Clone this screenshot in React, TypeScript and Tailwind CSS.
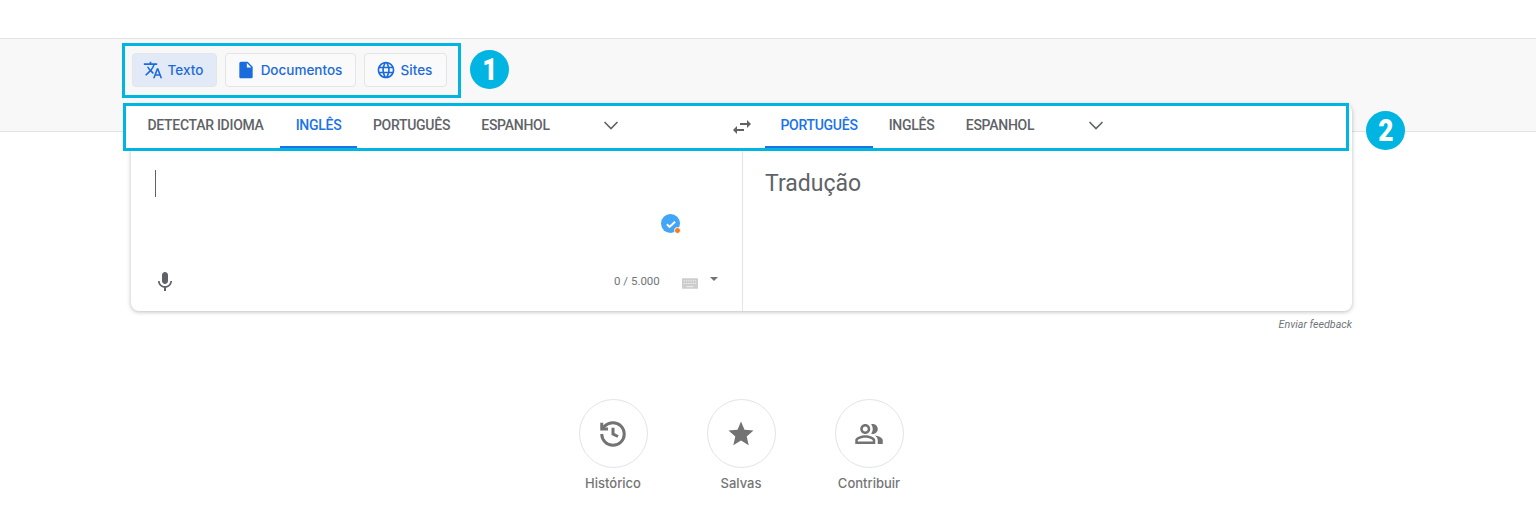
const roboto = "font-['Roboto',sans-serif]";

const Icon = ({ d, className }: { d: string; className: string }) => (
  <svg viewBox="0 0 24 24" fill="currentColor" className={className}>
    <path d={d} />
  </svg>
);

const Chevron = ({ className }: { className: string }) => (
  <svg viewBox="0 0 24 24" fill="none" stroke="currentColor" strokeWidth="1.6" className={`h-[24px] w-[24px] text-[#5f6368] ${className}`}>
    <path d="M5.5 9l6.5 6.5L18.5 9" />
  </svg>
);

const icons = {
  translate:
    "M12.87 15.07l-2.54-2.51.03-.03c1.74-1.94 2.98-4.17 3.71-6.53H17V4h-7V2H8v2H1v1.99h11.17C11.5 7.92 10.44 9.75 9 11.35 8.07 10.32 7.3 9.19 6.69 8h-2c.73 1.63 1.73 3.17 2.98 4.56l-5.09 5.02L4 19l5-5 3.11 3.11.76-2.04zM18.5 10h-2L12 22h2l1.12-3h4.75L21 22h2l-4.5-12zm-2.62 7l1.62-4.33L19.12 17h-3.24z",
  file: "M6 2c-1.1 0-1.99.9-1.99 2L4 20c0 1.1.89 2 1.99 2H18c1.1 0 2-.9 2-2V8l-6-6H6zm7 7V3.5L18.5 9H13z",
  globe:
    "M11.99 2C6.47 2 2 6.48 2 12s4.47 10 9.99 10C17.52 22 22 17.52 22 12S17.52 2 11.99 2zm6.93 6h-2.95c-.32-1.25-.78-2.45-1.38-3.56 1.84.63 3.37 1.91 4.33 3.56zM12 4.04c.83 1.2 1.48 2.53 1.91 3.96h-3.82c.43-1.43 1.08-2.76 1.91-3.96zM4.26 14C4.1 13.36 4 12.69 4 12s.1-1.36.26-2h3.38c-.08.66-.14 1.32-.14 2 0 .68.06 1.34.14 2H4.26zm.82 2h2.95c.32 1.25.78 2.45 1.38 3.56-1.84-.63-3.37-1.9-4.33-3.56zm2.95-8H5.08c.96-1.66 2.49-2.93 4.33-3.56C8.81 5.55 8.35 6.75 8.03 8zM12 19.96c-.83-1.2-1.48-2.53-1.91-3.96h3.82c-.43 1.43-1.08 2.76-1.91 3.96zM14.34 14H9.66c-.09-.66-.16-1.32-.16-2 0-.68.07-1.35.16-2h4.68c.09.65.16 1.32.16 2 0 .68-.07 1.34-.16 2zm.25 5.56c.6-1.11 1.06-2.31 1.38-3.56h2.95c-.96 1.65-2.49 2.93-4.33 3.56zM16.36 14c.08-.66.14-1.32.14-2 0-.68-.06-1.34-.14-2h3.38c.16.64.26 1.31.26 2s-.1 1.36-.26 2h-3.38z",
  swap: "M6.99 11L3 15l3.99 4v-3H14v-2H6.99v-3zM21 9l-3.99-4v3H10v2h7.01v3L21 9z",
  mic: "M12 14c1.66 0 2.99-1.34 2.99-3L15 5c0-1.66-1.34-3-3-3S9 3.34 9 5v6c0 1.66 1.34 3 3 3zm5.3-3c0 3-2.54 5.1-5.3 5.1S6.7 14 6.7 11H5c0 3.41 2.72 6.23 6 6.72V21h2v-3.28c3.28-.48 6-3.3 6-6.72h-1.7z",
  star: "M12 17.27L18.18 21l-1.64-7.03L22 9.24l-7.19-.61L12 2 9.19 8.63 2 9.24l5.46 4.73L5.82 21z",
  people:
    "M16.67 13.13C18.04 14.06 19 15.32 19 17v3h4v-3c0-2.18-3.57-3.47-6.33-3.87zM9 12c2.21 0 4-1.79 4-4s-1.79-4-4-4-4 1.79-4 4 1.79 4 4 4zm0-6c1.1 0 2 .9 2 2s-.9 2-2 2-2-.9-2-2 .9-2 2-2zm6 6c2.21 0 4-1.79 4-4s-1.79-4-4-4c-.47 0-.91.1-1.33.24C14.5 5.27 15 6.58 15 8s-.5 2.73-1.33 3.76c.42.14.86.24 1.33.24zm-6 1c-2.67 0-8 1.34-8 4v3h16v-3c0-2.66-5.33-4-8-4zm6 5H3v-.99C3.2 16.29 6.3 15 9 15s5.8 1.29 6 2v1z",
};

const HistoryIcon = () => (
  <svg viewBox="0 0 24 24" fill="none" stroke="currentColor" strokeWidth="2.4" className="h-[30px] w-[30px]">
    <path d="M3 12a9 9 0 1 0 9-9 9.75 9.75 0 0 0-6.74 2.74L3 8" />
    <path d="M3 3v5h5" />
    <path d="M12 7v5l4 2" />
  </svg>
);

const Badge = ({ n, className }: { n: string; className: string }) => (
  <div className={`flex h-[39px] w-[39px] items-center justify-center rounded-full bg-[#00b5e2] text-white ${className}`}>
    <span className="inline-block scale-x-[.85] font-['Roboto',sans-serif] text-[31px] font-black leading-none">{n}</span>
  </div>
);

const ModeButton = ({
  icon,
  label,
  width,
  active,
}: {
  icon: string;
  label: string;
  width: string;
  active?: boolean;
}) => (
  <button
    className={`flex h-[34px] items-center justify-center gap-[5px] rounded border border-[#e4e5e7] pr-[3px] font-['Inter',sans-serif] text-[13.5px] font-medium text-[#1a6bdc] ${width} ${
      active ? "bg-[#e3eaf7]" : "bg-[#fafafa]"
    }`}
  >
    <Icon d={icon} className="h-[20px] w-[20px]" />
    {label}
  </button>
);

const Tab = ({ label, active, width }: { label: string; active?: boolean; width: string }) => (
  <div
    className={`flex h-[42px] items-center justify-center border-b-2 pb-[2px] text-sm font-medium tracking-[-0.02em] ${width} ${
      active ? "border-[#1a73e8] text-[#1a73e8]" : "border-transparent text-[#5f6368]"
    }`}
  >
    {label}
  </div>
);

const Shortcut = ({ icon, label }: { icon: React.ReactNode; label: string }) => (
  <div className="flex w-[128px] flex-col items-center">
    <div className="flex h-[69px] w-[69px] items-center justify-center rounded-full border border-[#e2e3e5] bg-white text-[#737373]">
      {icon}
    </div>
    <span className="mt-[7px] font-['Inter',sans-serif] text-[13px] font-medium leading-[16px] text-[#757575]">
      {label}
    </span>
  </div>
);

export default function App() {
  return (
    <div className={`h-[530px] w-[1536px] overflow-hidden bg-white ${roboto}`}>
      <div className="h-[38px]" />

      {/* Faixa cinza com os modos */}
      <div className="flex h-[94px] items-start border-y border-[#e3e3e3] bg-[#f8f8f8] pl-[122px] pt-[4px]">
        <div className="flex h-[55px] w-[339px] items-center gap-[8px] border-[3px] border-[#00b5e2] pb-[1px] pl-[7px]">
          <ModeButton icon={icons.translate} label="Texto" width="w-[85px]" active />
          <ModeButton icon={icons.file} label="Documentos" width="w-[131px]" />
          <ModeButton icon={icons.globe} label="Sites" width="w-[83px]" />
        </div>
        <Badge n="1" className="ml-[9px] mt-[7px]" />
      </div>

      {/* Cartão do tradutor */}
      <div className="relative z-10 ml-[131px] mt-[-28px] flex h-[207px] w-[1221px] flex-col rounded-lg bg-white shadow-[0_1px_4px_rgba(60,64,67,0.35)]">
        <div className="-ml-[8px] -mt-px flex h-[48px] w-[1226px] items-center border-[3px] border-[#00b5e2] bg-white pl-[5px]">
          <Tab label="DETECTAR IDIOMA" width="w-[149px]" />
          <Tab label="INGLÊS" width="w-[77px]" active />
          <Tab label="PORTUGUÊS" width="w-[109px]" />
          <Tab label="ESPANHOL" width="w-[99px]" />
          <Chevron className="mb-[4px] ml-[34px]" />
          <Icon d={icons.swap} className="ml-[107px] h-[24px] w-[24px] text-[#5f6368]" />
          <div className="ml-[11px] flex">
            <Tab label="PORTUGUÊS" width="w-[108px]" active />
            <Tab label="INGLÊS" width="w-[77px]" />
            <Tab label="ESPANHOL" width="w-[100px]" />
          </div>
          <Chevron className="mb-[4px] ml-[34px]" />
        </div>

        <div className="flex h-[160px]">
          <div className="relative flex w-[612px] flex-col justify-between border-r border-[#e3e3e3] pb-[17px] pl-[24px] pt-[19px]">
            <div className="h-[27px] w-px bg-[#5f6368]" />
            <div className="absolute left-[530px] top-[63px] flex h-[19px] w-[19px] items-center justify-center rounded-full bg-[#42a5f5]">
              <svg viewBox="0 0 24 24" className="h-[14px] w-[14px] text-white" fill="none" stroke="currentColor" strokeWidth="3.5">
                <path d="M5 12.5l4.5 4.5L19 8" />
              </svg>
              <span className="absolute bottom-[-1px] right-[-1px] h-[7px] w-[7px] rounded-full border border-white bg-[#f57c20]" />
            </div>
            <div className="flex items-center">
              <Icon d={icons.mic} className="-ml-[2px] h-[24px] w-[24px] text-[#5f6368]" />
              <span className="ml-[437px] text-[11.5px] text-[#70757a]">0 / 5.000</span>
              <svg viewBox="0 0 18 12" className="ml-[22px] mt-[2px] h-[11px] w-[16px]">
                <rect width="18" height="12" rx="1" fill="#cdcdcd" />
                <path d="M2 3h14M2 6h14" stroke="#f2f2f2" strokeDasharray="1.5 1" />
                <path d="M5 9.5h8" stroke="#f2f2f2" />
              </svg>
              <svg viewBox="0 0 8 4" className="mb-[6px] ml-[12px] h-[4px] w-[8px] text-[#70757a]" fill="currentColor">
                <path d="M0 0h8L4 4z" />
              </svg>
            </div>
          </div>
          <div className="flex-1 pl-[22px] pt-[18px] text-[23px] leading-[30px] text-[#5f6368]">Tradução</div>
        </div>

        <Badge n="2" className="absolute left-[1235px] top-[7px]" />
      </div>

      <div className="ml-[131px] mt-[7px] w-[1221px] text-right text-[10.7px] italic leading-[14px] text-[#70757a]">
        Enviar feedback
      </div>

      {/* Atalhos */}
      <div className="mt-[67px] flex justify-center pr-[54px]">
        <Shortcut icon={<HistoryIcon />} label="Histórico" />
        <Shortcut icon={<Icon d={icons.star} className="h-[30px] w-[30px]" />} label="Salvas" />
        <Shortcut icon={<Icon d={icons.people} className="h-[30px] w-[30px]" />} label="Contribuir" />
      </div>
    </div>
  );
}
